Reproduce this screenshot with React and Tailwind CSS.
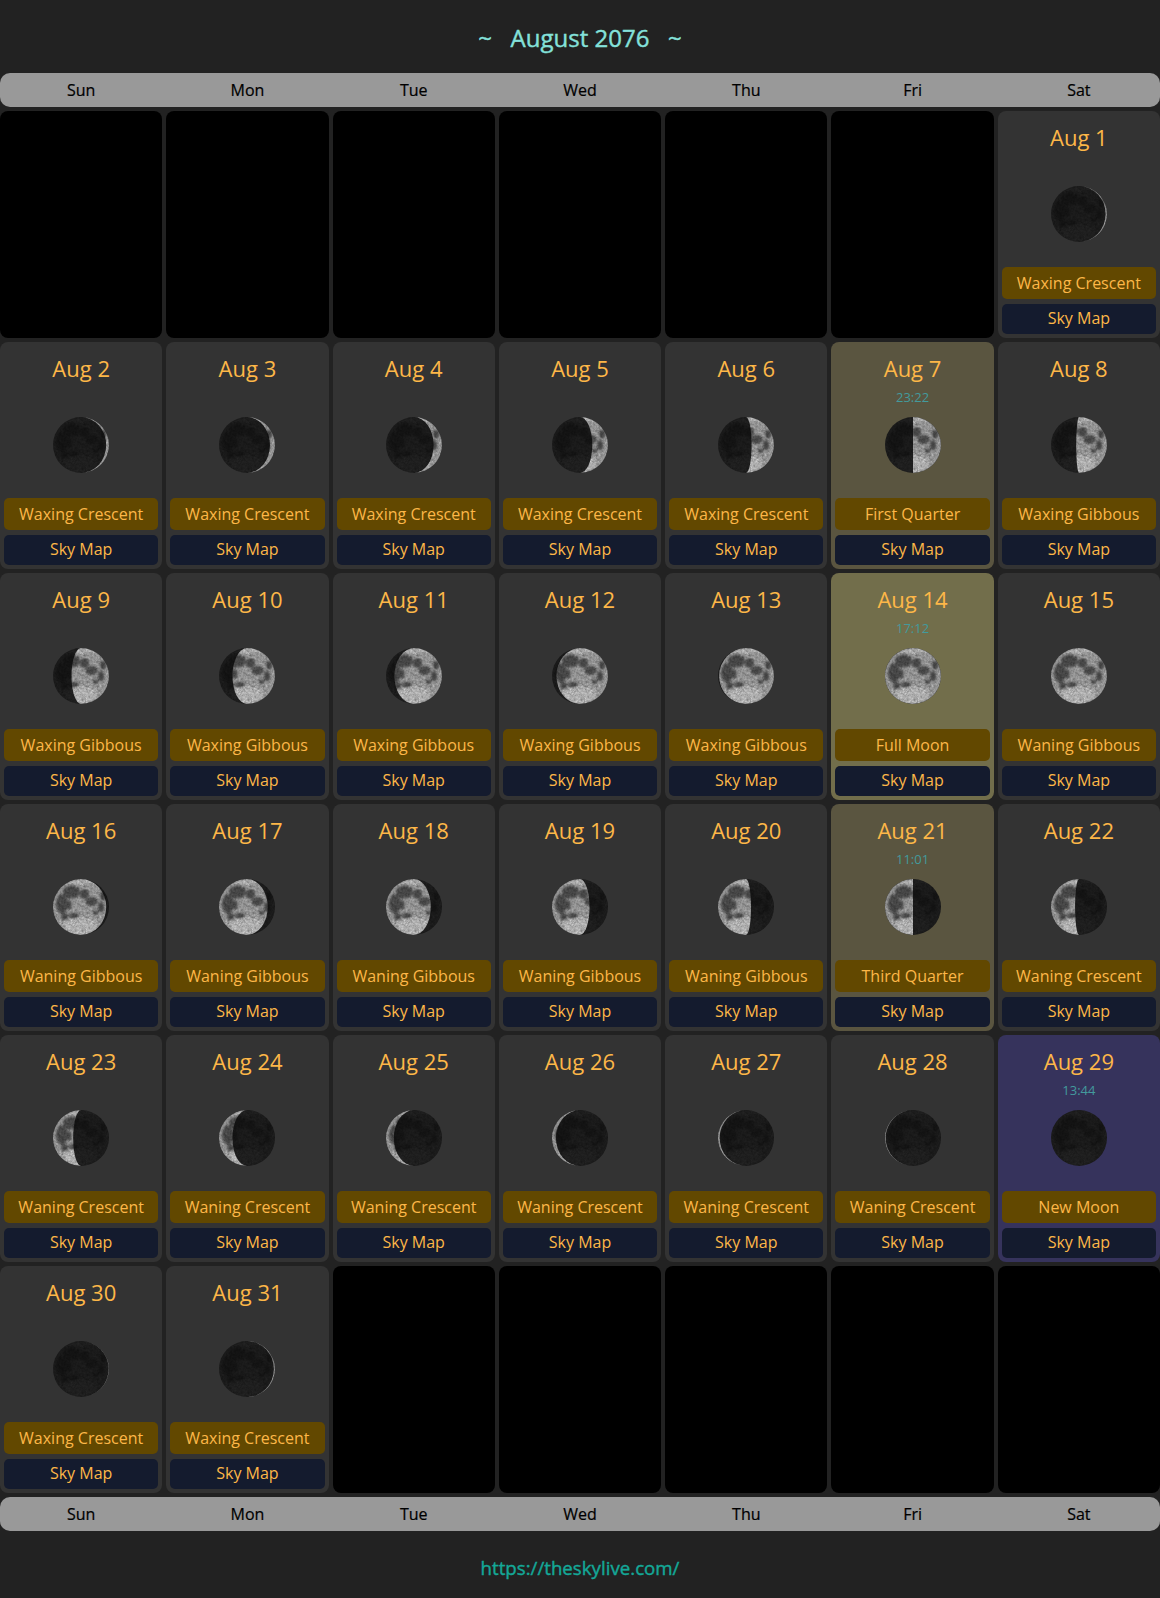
import { useId } from 'react';

const WEEK = ['Sun', 'Mon', 'Tue', 'Wed', 'Thu', 'Fri', 'Sat'];

// lit = share of the disc width in sunlight, side = which limb is lit
const DAYS = [
  { day: 1, lit: 0.025, side: 'r', phase: 'Waxing Crescent' },
  { day: 2, lit: 0.05, side: 'r', phase: 'Waxing Crescent' },
  { day: 3, lit: 0.09, side: 'r', phase: 'Waxing Crescent' },
  { day: 4, lit: 0.15, side: 'r', phase: 'Waxing Crescent' },
  { day: 5, lit: 0.28, side: 'r', phase: 'Waxing Crescent' },
  { day: 6, lit: 0.4, side: 'r', phase: 'Waxing Crescent' },
  { day: 7, lit: 0.5, side: 'r', phase: 'First Quarter', time: '23:22', bg: 'bg-[#5a5540]' },
  { day: 8, lit: 0.55, side: 'r', phase: 'Waxing Gibbous' },
  { day: 9, lit: 0.67, side: 'r', phase: 'Waxing Gibbous' },
  { day: 10, lit: 0.76, side: 'r', phase: 'Waxing Gibbous' },
  { day: 11, lit: 0.85, side: 'r', phase: 'Waxing Gibbous' },
  { day: 12, lit: 0.92, side: 'r', phase: 'Waxing Gibbous' },
  { day: 13, lit: 0.98, side: 'r', phase: 'Waxing Gibbous' },
  { day: 14, lit: 1, side: 'r', phase: 'Full Moon', time: '17:12', bg: 'bg-[#726e4b]' },
  { day: 15, lit: 1, side: 'l', phase: 'Waning Gibbous' },
  { day: 16, lit: 0.95, side: 'l', phase: 'Waning Gibbous' },
  { day: 17, lit: 0.87, side: 'l', phase: 'Waning Gibbous' },
  { day: 18, lit: 0.8, side: 'l', phase: 'Waning Gibbous' },
  { day: 19, lit: 0.67, side: 'l', phase: 'Waning Gibbous' },
  { day: 20, lit: 0.59, side: 'l', phase: 'Waning Gibbous' },
  { day: 21, lit: 0.5, side: 'l', phase: 'Third Quarter', time: '11:01', bg: 'bg-[#5a5540]' },
  { day: 22, lit: 0.43, side: 'l', phase: 'Waning Crescent' },
  { day: 23, lit: 0.36, side: 'l', phase: 'Waning Crescent' },
  { day: 24, lit: 0.24, side: 'l', phase: 'Waning Crescent' },
  { day: 25, lit: 0.14, side: 'l', phase: 'Waning Crescent' },
  { day: 26, lit: 0.07, side: 'l', phase: 'Waning Crescent' },
  { day: 27, lit: 0.03, side: 'l', phase: 'Waning Crescent' },
  { day: 28, lit: 0.012, side: 'l', phase: 'Waning Crescent' },
  { day: 29, lit: 0, side: 'r', phase: 'New Moon', time: '13:44', bg: 'bg-[#36335c]' },
  { day: 30, lit: 0.006, side: 'r', phase: 'Waxing Crescent' },
  { day: 31, lit: 0.02, side: 'r', phase: 'Waxing Crescent' }
];

const litPath = (lit, side) => {
  const rx = (28 * Math.abs(1 - 2 * lit)).toFixed(2);
  const limb = side === 'r' ? 1 : 0;
  const bulgesToLimb = lit < 0.5;
  const back = side === 'r' ? (bulgesToLimb ? 0 : 1) : bulgesToLimb ? 1 : 0;
  return `M28 0A28 28 0 0 ${limb} 28 56A${rx} 28 0 0 ${back} 28 0Z`;
};

const Face = ({ base, sea, bright, filter }) => (
  <g filter={`url(#${filter})`}>
    <circle cx="28" cy="28" r="30" fill={base} />
    <ellipse cx="27" cy="47" rx="17" ry="9" fill={bright} />
    <ellipse cx="28" cy="3" rx="14" ry="2.2" fill={bright} />
    <ellipse cx="9" cy="25" rx="6" ry="10" fill={sea} />
    <ellipse cx="18.5" cy="13" rx="8.6" ry="6.6" fill={sea} />
    <ellipse cx="31.5" cy="15" rx="4.6" ry="4.8" fill={sea} />
    <ellipse cx="38.5" cy="22.5" rx="6" ry="4.6" fill={sea} />
    <ellipse cx="50" cy="17" rx="3.2" ry="4.2" fill={sea} />
    <ellipse cx="48" cy="28" rx="3.2" ry="5.2" fill={sea} />
    <ellipse cx="42.5" cy="33.5" rx="2.4" ry="2.6" fill={sea} />
    <ellipse cx="11.5" cy="37.5" rx="3.4" ry="3.4" fill={sea} />
    <ellipse cx="21" cy="36.5" rx="5.2" ry="2.8" fill={sea} />
    <ellipse cx="16" cy="26" rx="2.6" ry="4.4" fill={sea} />
  </g>
);

const Moon = ({ lit, side }) => {
  const id = useId().replace(/[^a-zA-Z0-9]/g, '');
  return (
    <svg viewBox="0 0 56 56" className="w-14 h-14 block">
      <defs>
        <filter id={`g${id}`} x="0" y="0" width="100%" height="100%" colorInterpolationFilters="sRGB">
          <feGaussianBlur in="SourceGraphic" stdDeviation="1.3" result="soft" />
          <feTurbulence type="fractalNoise" baseFrequency="0.45" numOctaves="3" seed="4" result="noise" />
          <feColorMatrix in="noise" type="matrix" values="0.5 0.5 0 0 0 0.5 0.5 0 0 0 0.5 0.5 0 0 0 0 0 0 0 1" result="grey" />
          <feComposite in="soft" in2="grey" operator="arithmetic" k1="0.9" k2="0.55" k3="0" k4="0" />
        </filter>
        <clipPath id={`c${id}`}>
          <path d={litPath(lit, side)} />
        </clipPath>
        <clipPath id={`d${id}`}>
          <circle cx="28" cy="28" r="28" />
        </clipPath>
      </defs>
      <g clipPath={`url(#d${id})`}>
        <Face base="#1a1a1a" sea="#131313" bright="#1e1e1e" filter={`g${id}`} />
      </g>
      {lit > 0 && (
        <g clipPath={`url(#c${id})`}>
          <Face base="#929292" sea="#464646" bright="#adadad" filter={`g${id}`} />
        </g>
      )}
    </svg>
  );
};

const WeekBar = () => (
  <div className="grid grid-cols-7 gap-1 h-[34px] bg-[#999999] rounded-[10px] text-black text-base leading-[34px] text-center [-webkit-text-stroke:0.2px]">
    {WEEK.map((name) => (
      <div key={name}>{name}</div>
    ))}
  </div>
);

const DayCell = ({ day, lit, side, phase, time, bg = 'bg-[#333333]' }) => (
  <div className={`${bg} h-[227px] rounded-lg p-1 flex flex-col items-center text-[#fdb748]`}>
    <div className="mt-[2px] mb-px h-10 leading-10 text-[22px]">Aug {day}</div>
    <div className="h-4 leading-4 text-[13px] text-[#439a9c]">{time}</div>
    <div className="mt-3">
      <Moon lit={lit} side={side} />
    </div>
    <div className="mt-auto w-full h-8 leading-8 text-center text-base bg-[#624800] rounded-[5px]">{phase}</div>
    <div className="mt-[5px] w-full h-[30px] leading-[28px] text-center text-base bg-[#141b2e] rounded-[5px]">Sky Map</div>
  </div>
);

const EmptyCell = () => <div className="h-[227px] rounded-lg bg-black" />;

const App = () => {
  return (
    <div className="min-h-[1598px] bg-[#222222] font-['Open_Sans',sans-serif]">
      <h1 className="h-[73px] leading-[75px] text-center text-2xl font-normal text-[#84e1da] whitespace-pre [-webkit-text-stroke:0.4px]">
        {'~\u00a0\u00a0\u00a0August 2076\u00a0\u00a0\u00a0~'}
      </h1>
      <WeekBar />
      <div className="grid grid-cols-7 gap-1 my-1">
        {[...Array(6)].map((_, i) => (
          <EmptyCell key={`a${i}`} />
        ))}
        {DAYS.map((d) => (
          <DayCell key={d.day} {...d} />
        ))}
        {[...Array(5)].map((_, i) => (
          <EmptyCell key={`b${i}`} />
        ))}
      </div>
      <WeekBar />
      <div className="h-[67px] pt-[24px] text-center">
        <a href="#" className="text-[18.7px] leading-[26px] text-[#14a898] [-webkit-text-stroke:0.4px]">
          https://theskylive.com/
        </a>
      </div>
    </div>
  );
};

export default App;
